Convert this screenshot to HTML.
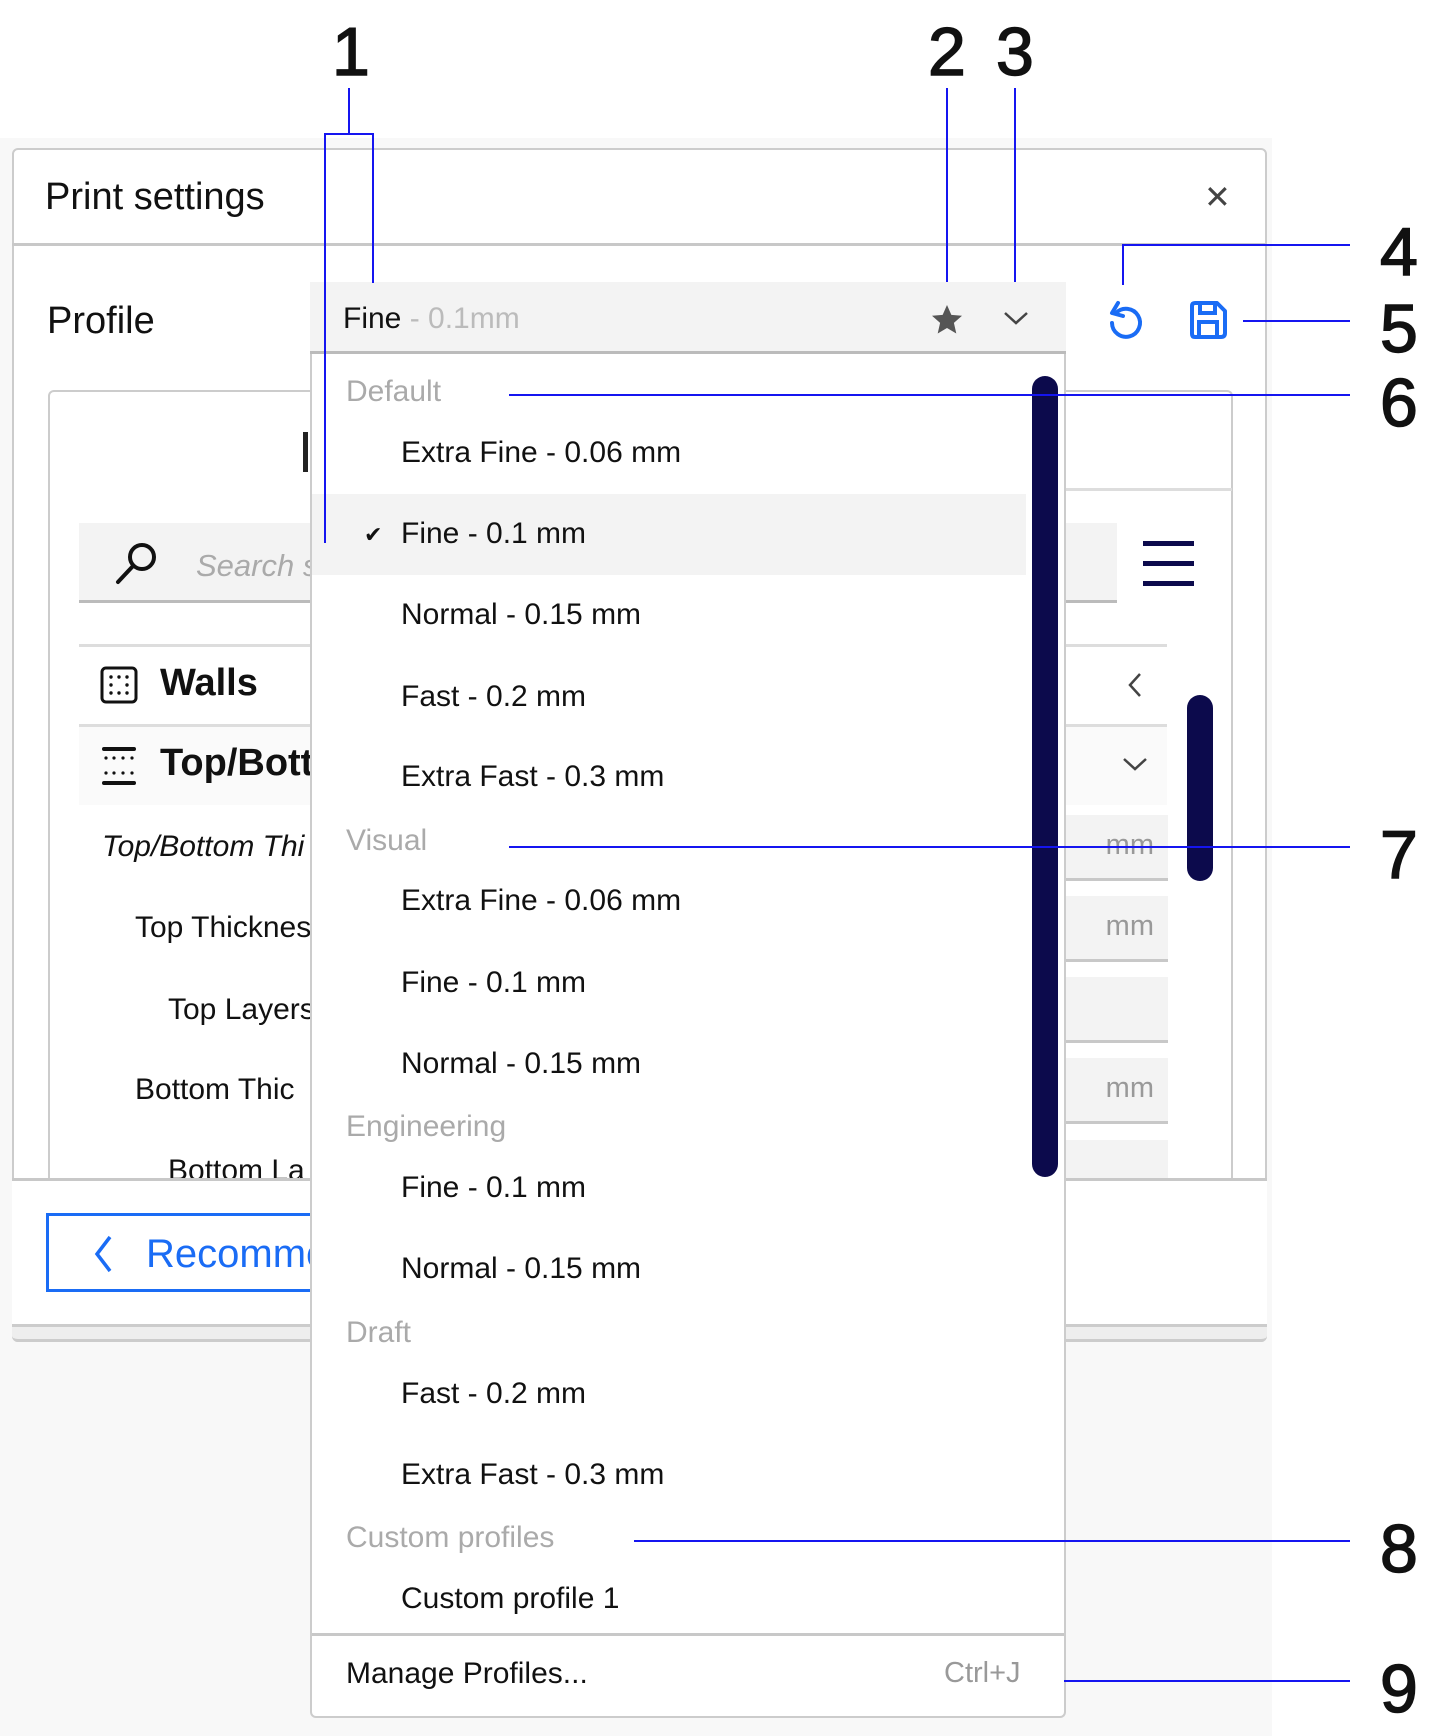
<!DOCTYPE html>
<html><head><meta charset="utf-8"><style>
*{margin:0;padding:0;box-sizing:border-box}
body{width:1438px;height:1736px;background:#fff;position:relative;overflow:hidden;font-family:"Liberation Sans",sans-serif;color:#111}
.a{position:absolute}
.bl{position:absolute;background:#1515f0}
.num{position:absolute;font-size:68px;font-weight:normal;color:#111;line-height:1;-webkit-text-stroke:1.5px #111}
.it{position:absolute;left:401px;font-size:30px;color:#111;line-height:1}
.hd{position:absolute;left:346px;font-size:30px;color:#aaa;line-height:1}
.inp{position:absolute;left:1066px;width:102px;background:#f3f3f3;border-bottom:3px solid #c8c8c8}
.mm{position:absolute;right:14px;font-size:29px;color:#999}
.lbl{position:absolute;font-size:30px;color:#111}
</style></head><body>
<div class="a" style="left:0;top:138px;width:1272px;height:1598px;background:#f8f8f8"></div>
<div class="a" style="left:12px;top:148px;width:1255px;height:1194px;background:#fff;border:2px solid #ccc;border-radius:6px"></div>
<div class="a" style="left:12px;top:243px;width:1255px;height:3px;background:#c8c8c8"></div>
<div class="a" style="left:45px;top:176px;font-size:38px">Print settings</div>
<div class="a" style="left:1204px;top:178px;font-size:32px;color:#444">✕</div>
<div class="a" style="left:47px;top:300px;font-size:38px">Profile</div>
<div class="a" style="left:48px;top:390px;width:1185px;height:790px;border:2px solid #ccc;border-bottom:none;border-radius:6px 6px 0 0"></div>
<div class="a" style="left:1066px;top:488px;width:166px;height:3px;background:#ddd"></div>
<div class="a" style="left:303px;top:432px;width:5px;height:40px;background:#222"></div>
<div class="a" style="left:79px;top:523px;width:1038px;height:80px;background:#f3f3f3;border-bottom:3px solid #bbb"></div>
<svg class="a" style="left:112px;top:538px" width="48" height="50" viewBox="0 0 48 50"><circle cx="30" cy="19" r="12" fill="none" stroke="#111" stroke-width="4"/><line x1="21" y1="28" x2="6" y2="44" stroke="#111" stroke-width="4" stroke-linecap="round"/></svg>
<div class="a" style="left:196px;top:548px;font-size:31px;font-style:italic;color:#aaa">Search s</div>
<div class="a" style="left:1143px;top:541px;width:51px;height:5px;background:#0c0a4c"></div>
<div class="a" style="left:1143px;top:561px;width:51px;height:5px;background:#0c0a4c"></div>
<div class="a" style="left:1143px;top:581px;width:51px;height:5px;background:#0c0a4c"></div>
<div class="a" style="left:79px;top:644px;width:1088px;height:3px;background:#ddd"></div>
<svg class="a" style="left:100px;top:666px" width="38" height="38" viewBox="0 0 38 38"><rect x="2" y="2" width="34" height="34" rx="4" fill="none" stroke="#111" stroke-width="3"/><g fill="#111"><circle cx="11" cy="11" r="1.7"/><circle cx="19" cy="11" r="1.7"/><circle cx="27" cy="11" r="1.7"/><circle cx="11" cy="19" r="1.7"/><circle cx="27" cy="19" r="1.7"/><circle cx="11" cy="27" r="1.7"/><circle cx="19" cy="27" r="1.7"/><circle cx="27" cy="27" r="1.7"/></g></svg>
<div class="a" style="left:160px;top:662px;font-size:38px;font-weight:bold">Walls</div>
<div class="a" style="left:79px;top:724px;width:1088px;height:3px;background:#ddd"></div>
<div class="a" style="left:79px;top:727px;width:1088px;height:78px;background:#fafafa"></div>
<svg class="a" style="left:100px;top:746px" width="38" height="40" viewBox="0 0 38 40"><rect x="2" y="1" width="34" height="4" rx="2" fill="#111"/><rect x="2" y="35" width="34" height="4" rx="2" fill="#111"/><g fill="#111"><circle cx="6" cy="12" r="1.6"/><circle cx="14" cy="12" r="1.6"/><circle cx="23" cy="12" r="1.6"/><circle cx="32" cy="12" r="1.6"/><circle cx="6" cy="27" r="1.6"/><circle cx="14" cy="27" r="1.6"/><circle cx="23" cy="27" r="1.6"/><circle cx="32" cy="27" r="1.6"/></g></svg>
<div class="a" style="left:160px;top:742px;font-size:38px;font-weight:bold">Top/Bott</div>
<svg class="a" style="left:1126px;top:671px" width="18" height="28" viewBox="0 0 18 28"><path d="M14 3 L4 14 L14 25" fill="none" stroke="#444" stroke-width="2.5"/></svg>
<svg class="a" style="left:1121px;top:755px" width="28" height="18" viewBox="0 0 28 18"><path d="M3 4 L14 14 L25 4" fill="none" stroke="#444" stroke-width="2.5"/></svg>
<div class="a" style="left:1187px;top:695px;width:26px;height:186px;border-radius:13px;background:#0c0a4c"></div>
<div class="lbl" style="left:102px;top:830px;font-style:italic">Top/Bottom Thi</div>
<div class="lbl" style="left:135px;top:911px">Top Thicknes</div>
<div class="lbl" style="left:168px;top:993px">Top Layers</div>
<div class="lbl" style="left:135px;top:1073px">Bottom Thic</div>
<div class="lbl" style="left:168px;top:1154px">Bottom La</div>
<div class="inp" style="top:815px;height:66px"><span class="mm" style="top:14px">mm</span></div>
<div class="inp" style="top:896px;height:66px"><span class="mm" style="top:14px">mm</span></div>
<div class="inp" style="top:977px;height:66px"></div>
<div class="inp" style="top:1058px;height:66px"><span class="mm" style="top:14px">mm</span></div>
<div class="a" style="left:1066px;top:1140px;width:102px;height:40px;background:#f3f3f3"></div>
<div class="a" style="left:12px;top:1178px;width:1255px;height:146px;background:#fff;border-top:3px solid #c8c8c8"></div>
<div class="a" style="left:12px;top:1324px;width:1255px;height:18px;background:#eee;border-top:3px solid #ccc;border-bottom:3px solid #ccc;border-radius:0 0 6px 6px"></div>
<div class="a" style="left:46px;top:1213px;width:300px;height:79px;border:3px solid #1a6cf5;border-right:none"></div>
<svg class="a" style="left:92px;top:1234px" width="22" height="40" viewBox="0 0 22 40"><path d="M18 3 L5 20 L18 37" fill="none" stroke="#1a6cf5" stroke-width="3.5"/></svg>
<div class="a" style="left:146px;top:1232px;font-size:40px;color:#1a6cf5">Recomme</div>
<div class="a" style="left:310px;top:282px;width:756px;height:72px;background:#f3f3f3;border-bottom:3px solid #bbb"></div>
<div class="a" style="left:343px;top:302px;font-size:30px"><span>Fine</span><span style="color:#bbb"> - 0.1mm</span></div>
<svg class="a" style="left:929px;top:302px" width="36" height="36" viewBox="0 0 24 24"><path d="M12 2 L14.9 8.6 L22 9.2 L16.6 13.9 L18.2 21 L12 17.3 L5.8 21 L7.4 13.9 L2 9.2 L9.1 8.6 Z" fill="#555"/></svg>
<svg class="a" style="left:1003px;top:310px" width="26" height="16" viewBox="0 0 26 16"><path d="M2 3 L13 13 L24 3" fill="none" stroke="#444" stroke-width="2.5"/></svg>
<svg class="a" style="left:1104px;top:299px" width="40" height="44" viewBox="0 0 40 44"><path d="M12 14 A14 14 0 1 1 8 24" fill="none" stroke="#1a6cf5" stroke-width="4" stroke-linecap="round"/><path d="M14 4 L8 14 L19 17" fill="none" stroke="#1a6cf5" stroke-width="4" stroke-linecap="round" stroke-linejoin="round"/></svg>
<svg class="a" style="left:1188px;top:300px" width="40" height="40" viewBox="0 0 40 40"><path d="M4 6 Q4 3 7 3 H29 L37 11 V33 Q37 37 33 37 H7 Q4 37 4 34 Z" fill="none" stroke="#1a6cf5" stroke-width="4" stroke-linejoin="round"/><path d="M12 3 V13 H27 V3" fill="none" stroke="#1a6cf5" stroke-width="4"/><rect x="11" y="22" width="18" height="15" fill="none" stroke="#1a6cf5" stroke-width="4"/></svg>
<div class="a" style="left:310px;top:354px;width:756px;height:1364px;background:#fff;border:2px solid #ccc;border-top:none;border-radius:0 0 6px 6px"></div>
<div class="a" style="left:312px;top:494px;width:714px;height:81px;background:#f3f3f3"></div>
<div class="a" style="left:1032px;top:376px;width:26px;height:801px;border-radius:13px;background:#0c0a4c"></div>
<div class="hd" style="top:377px">Default</div>
<div class="it" style="top:438px">Extra Fine - 0.06 mm</div>
<div class="a" style="left:364px;top:522px;font-size:22px">✔</div>
<div class="it" style="top:519px">Fine - 0.1 mm</div>
<div class="it" style="top:600px">Normal - 0.15 mm</div>
<div class="it" style="top:682px">Fast - 0.2 mm</div>
<div class="it" style="top:762px">Extra Fast - 0.3 mm</div>
<div class="hd" style="top:826px">Visual</div>
<div class="it" style="top:886px">Extra Fine - 0.06 mm</div>
<div class="it" style="top:968px">Fine - 0.1 mm</div>
<div class="it" style="top:1049px">Normal - 0.15 mm</div>
<div class="hd" style="top:1112px">Engineering</div>
<div class="it" style="top:1173px">Fine - 0.1 mm</div>
<div class="it" style="top:1254px">Normal - 0.15 mm</div>
<div class="hd" style="top:1318px">Draft</div>
<div class="it" style="top:1379px">Fast - 0.2 mm</div>
<div class="it" style="top:1460px">Extra Fast - 0.3 mm</div>
<div class="hd" style="top:1523px">Custom profiles</div>
<div class="it" style="top:1584px">Custom profile 1</div>
<div class="a" style="left:312px;top:1633px;width:752px;height:3px;background:#c8c8c8"></div>
<div class="a" style="left:346px;top:1657px;font-size:30px">Manage Profiles...</div>
<div class="a" style="left:944px;top:1657px;font-size:29px;color:#999">Ctrl+J</div>
<div class="num" style="left:332px;top:18px">1</div>
<div class="num" style="left:928px;top:18px">2</div>
<div class="num" style="left:996px;top:18px">3</div>
<div class="num" style="left:1380px;top:218px">4</div>
<div class="num" style="left:1380px;top:295px">5</div>
<div class="num" style="left:1380px;top:369px">6</div>
<div class="num" style="left:1380px;top:821px">7</div>
<div class="num" style="left:1380px;top:1515px">8</div>
<div class="num" style="left:1380px;top:1655px">9</div>
<div class="bl" style="left:348px;top:88px;width:2px;height:46px"></div>
<div class="bl" style="left:324px;top:133px;width:50px;height:2px"></div>
<div class="bl" style="left:372px;top:133px;width:2px;height:150px"></div>
<div class="bl" style="left:324px;top:133px;width:2px;height:410px"></div>
<div class="bl" style="left:946px;top:88px;width:2px;height:194px"></div>
<div class="bl" style="left:1014px;top:88px;width:2px;height:194px"></div>
<div class="bl" style="left:1122px;top:244px;width:228px;height:2px"></div>
<div class="bl" style="left:1122px;top:244px;width:2px;height:41px"></div>
<div class="bl" style="left:1243px;top:320px;width:107px;height:2px"></div>
<div class="bl" style="left:509px;top:394px;width:841px;height:2px"></div>
<div class="bl" style="left:509px;top:846px;width:841px;height:2px"></div>
<div class="bl" style="left:634px;top:1540px;width:716px;height:2px"></div>
<div class="bl" style="left:1064px;top:1680px;width:286px;height:2px"></div>
</body></html>
